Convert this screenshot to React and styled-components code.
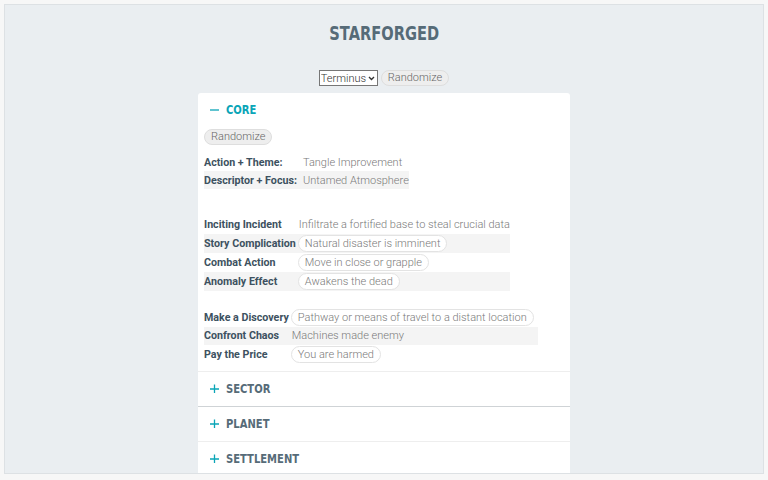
import React from 'react';
import styled, { createGlobalStyle } from 'styled-components';

const GlobalStyle = createGlobalStyle`
  html, body {
    margin: 0;
    padding: 0;
    background: #f7f7f7;
  }
  body {
    font-family: Roboto, "Liberation Sans", sans-serif;
    padding: 4px;
  }
`;

const Frame = styled.div`
  height: 470px;
  box-sizing: border-box;
  border: 1px solid #dde1e4;
  background: #eaeef1;
  overflow: hidden;
  display: flex;
  flex-direction: column;
  align-items: center;
`;

const Title = styled.h1`
  margin: 17px 0 0;
  font-family: "DejaVu Sans", sans-serif;
  font-weight: 700;
  font-size: 19.5px;
  color: #566b78;
  transform: scaleX(0.75);
`;

const Controls = styled.div`
  display: flex;
  align-items: center;
  gap: 3px;
  margin-top: 25px;
`;

const SelectBox = styled.label`
  display: flex;
  align-items: center;
  gap: 1px;
  height: 16px;
  box-sizing: border-box;
  padding: 0 2px 0 1px;
  border: 1px solid #767676;
  background: #fff;
`;

const Select = styled.select`
  appearance: none;
  font-family: Roboto, sans-serif;
  font-weight: 300;
  font-size: 11px;
  padding: 0;
  color: #333;
  border: none;
  background: transparent;
  outline: none;
`;

const Chevron = styled.svg`
  width: 7px;
  height: 5px;
  flex: none;
`;

const Pill = styled.button`
  font-family: Roboto, sans-serif;
  font-weight: 300;
  font-size: 11px;
  color: #666;
  background: ${(p) => (p.$filled ? '#eeeeee' : '#fff')};
  border: 1px solid ${(p) => (p.$filled ? '#dedede' : '#e2e2e2')};
  border-radius: 9px;
  height: 16px;
  padding: 0 6px;
  line-height: 14px;
  cursor: pointer;
`;

const Card = styled.div`
  width: 372px;
  margin-top: 7px;
  background: #fff;
  border-radius: 3px;
`;

const Section = styled.div`
  border-bottom: 1px solid ${(p) => p.$line || '#eeeeee'};
`;

const Header = styled.div`
  display: flex;
  align-items: center;
  gap: 7px;
  height: ${(p) => (p.$open ? 32 : 34)}px;
  padding: 0 12px;
  font-family: "DejaVu Sans", sans-serif;
  font-weight: 700;
  font-size: 12.5px;
  color: ${(p) => (p.$open ? '#0aa5b7' : '#566b78')};
`;

const HeaderText = styled.span`
  display: inline-block;
  transform: scaleX(0.8);
  transform-origin: left center;
`;

const Icon = styled.svg`
  width: 9px;
  height: 9px;
  flex: none;
`;

const Body = styled.div`
  padding: 0 6px 7px;
`;

const Table = styled.table`
  border-collapse: collapse;
  margin-top: ${(p) => p.$top || 0}px;

  tr:nth-child(even) td {
    background: #f4f4f4;
  }
`;

const Label = styled.td`
  font-weight: 700;
  font-size: 10.7px;
  color: #3d5160;
  padding: 0 2px 0 0;
  height: ${(p) => p.$h}px;
  white-space: nowrap;
`;

const Value = styled.td`
  font-weight: 300;
  font-size: 11px;
  color: #7a7a7a;
  padding: 0 ${(p) => (p.$pad ? 0 : 4)}px 0 ${(p) => p.$pad || 0}px;
  white-space: nowrap;
`;

const ValuePill = styled.span`
  display: inline-block;
  border: 1px solid #e3e3e3;
  border-radius: 9px;
  padding: 0 6px;
  line-height: 15px;
  background: #fff;
`;

const Minus = () => (
  <Icon viewBox="0 0 9 9">
    <path d="M0 5h9" stroke="#0aa5b7" strokeWidth="1.3" />
  </Icon>
);

const Plus = () => (
  <Icon viewBox="0 0 9 9">
    <path d="M0 5h9M4.5 0.5v9" stroke="#0aa5b7" strokeWidth="1.3" />
  </Icon>
);

const tables = [
  {
    top: 8,
    pad: 4,
    h: 18,
    rows: [
      ['Action + Theme:', 'Tangle Improvement'],
      ['Descriptor + Focus:', 'Untamed Atmosphere'],
    ],
  },
  {
    top: 26,
    pad: 1,
    h: 19,
    rows: [
      ['Inciting Incident', 'Infiltrate a fortified base to steal crucial data'],
      ['Story Complication', 'Natural disaster is imminent', true],
      ['Combat Action', 'Move in close or grapple', true],
      ['Anomaly Effect', 'Awakens the dead', true],
    ],
  },
  {
    top: 17,
    pad: 1,
    h: 18.5,
    rows: [
      ['Make a Discovery', 'Pathway or means of travel to a distant location', true],
      ['Confront Chaos', 'Machines made enemy'],
      ['Pay the Price', 'You are harmed', true],
    ],
  },
];

const sections = [
  { name: 'SECTOR', line: '#cfd3d6' },
  { name: 'PLANET' },
  { name: 'SETTLEMENT' },
];

function App() {
  return (
    <>
      <GlobalStyle />
      <Frame>
        <Title>STARFORGED</Title>
        <Controls>
          <SelectBox>
            <Select defaultValue="Terminus">
              <option>Terminus</option>
              <option>Outlands</option>
              <option>Expanse</option>
            </Select>
            <Chevron viewBox="0 0 7 5">
              <path d="M1 1l2.5 2.5L6 1" fill="none" stroke="#333" strokeWidth="1.4" />
            </Chevron>
          </SelectBox>
          <Pill $filled>Randomize</Pill>
        </Controls>
        <Card>
          <Section>
            <Header $open>
              <Minus />
              <HeaderText>CORE</HeaderText>
            </Header>
            <Body>
              <Pill $filled>Randomize</Pill>
              {tables.map((t, i) => (
                <Table key={i} $top={t.top}>
                  <tbody>
                    {t.rows.map(([label, value, pill]) => (
                      <tr key={label}>
                        <Label $h={t.h}>{label}</Label>
                        <Value $pad={pill ? 0 : t.pad}>
                          {pill ? <ValuePill>{value}</ValuePill> : value}
                        </Value>
                      </tr>
                    ))}
                  </tbody>
                </Table>
              ))}
            </Body>
          </Section>
          {sections.map((s) => (
            <Section key={s.name} $line={s.line}>
              <Header>
                <Plus />
                <HeaderText>{s.name}</HeaderText>
              </Header>
            </Section>
          ))}
        </Card>
      </Frame>
    </>
  );
}

export default App;
